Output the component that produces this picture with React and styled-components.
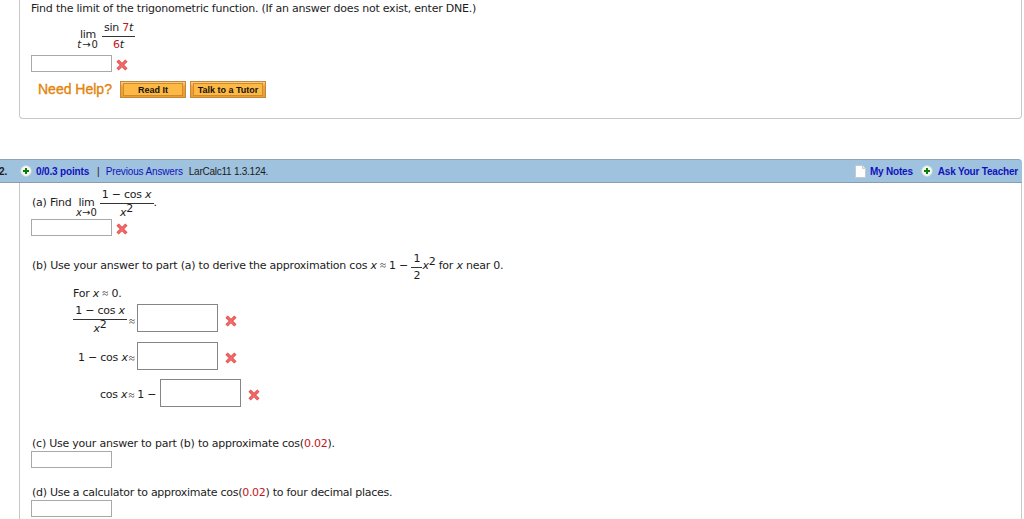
import React from 'react';
import styled, { createGlobalStyle } from 'styled-components';

const GlobalStyle = createGlobalStyle`
  * {
    box-sizing: border-box;
  }
  body {
    margin: 0;
    background: #fff;
    overflow: hidden;
  }
`;

const Page = styled.div`
  width: 1024px;
  height: 519px;
  overflow: hidden;
  color: #1c1c1c;
  font: 11px/16px 'DejaVu Sans', Verdana, sans-serif;
  white-space: pre;
`;

const QuestionBody = styled.section`
  margin-left: 19px;
  width: 1003px;
  height: ${props => props.$height}px;
  padding: 0 0 0 11px;
  border: 1px solid #c9c9c9;
  border-top: 0;
  border-radius: 0 0 4px 4px;
`;

const QuestionBar = styled.header`
  display: flex;
  align-items: center;
  width: 1022px;
  height: 24px;
  margin-top: 40px;
  padding-right: 4px;
  background: #9fc2df;
  border-top: 1px solid #93a4b2;
  border-bottom: 1px solid #8b9dac;
  border-radius: 0 4px 0 0;
  font: 10px/22px 'Liberation Sans', Arial, sans-serif;
`;

const BarNumber = styled.strong`
  width: 21px;
  margin-left: -1px;
  padding-top: 1px;
`;

const BarLink = styled.a`
  color: #1212bb;
  padding-top: 1px;
  margin-left: ${props => props.$gap || 0}px;
  font-weight: ${props => (props.$bold ? 'bold' : 'normal')};
  letter-spacing: ${props => props.$spacing || 0}px;
`;

const BarText = styled.span`
  padding-top: 1px;
  margin-left: ${props => props.$gap}px;
  letter-spacing: ${props => props.$spacing || 0}px;
`;

const BarTool = styled.div`
  display: flex;
  align-items: center;
  margin-left: ${props => (props.$first ? 'auto' : '8px')};
`;

const Line = styled.div`
  display: flex;
  align-items: flex-start;
  height: ${props => props.$height || 16}px;
  padding-top: ${props => props.$top || 0}px;
  padding-left: ${props => props.$indent || 0}px;
  letter-spacing: ${props => props.$spacing || -0.23}px;
`;

const Text = styled.span`
  margin-top: ${props => props.$top || 0}px;
  margin-left: ${props => props.$gap || 0}px;
`;

const Value = styled.span`
  color: #c4151c;
`;

const Approx = styled.span`
  font-family: 'Liberation Serif', serif;
  font-size: 11px;
  line-height: 0;
  margin: ${props => props.$margin || '0'};
`;

const LimitBox = styled.span`
  display: flex;
  flex-direction: column;
  align-items: center;
  width: 24px;
  margin-top: ${props => props.$top}px;
  margin-left: ${props => props.$gap || 0}px;
  line-height: 10px;
`;

const Under = styled.span`
  font-size: 10px;
  line-height: 9px;
  letter-spacing: ${props => props.$spacing || 0}px;
`;

const FractionBox = styled.span`
  display: flex;
  flex-direction: column;
  align-items: center;
  width: ${props => props.$width}px;
  margin-left: ${props => props.$gap || 0}px;
`;

const Numerator = styled.span`
  width: 100%;
  height: 16px;
  line-height: 14px;
  text-align: center;
  border-bottom: 1px solid #333;
`;

const Denominator = styled.span`
  padding-top: ${props => props.$top || 0}px;
  line-height: 16px;
`;

const Power = styled.sup`
  font-size: 11px;
  line-height: 0;
  vertical-align: 4px;
`;

const Answer = styled.input`
  display: block;
  flex: none;
  width: 81px;
  height: ${props => (props.$tall ? 28 : 17)}px;
  margin: 0;
  padding: 0 3px;
  background: #fff;
  border: 1px solid ${props => (props.$tall ? '#858585' : '#a9a9a9')};
  border-radius: 0;
  margin-left: ${props => props.$gap || 0}px;
  outline: none;
`;

const WrongIcon = styled.svg`
  flex: none;
  width: 12px;
  height: 12px;
  margin-top: ${props => props.$top}px;
  margin-left: ${props => props.$gap}px;
`;

const HelpRow = styled.div`
  display: flex;
  align-items: center;
  height: 17px;
  margin-top: 9px;
  padding-left: 7px;
`;

const HelpLabel = styled.span`
  width: 82px;
  color: #df850d;
  font: 14px/17px 'Liberation Sans', Arial, sans-serif;
  -webkit-text-stroke: 0.35px #df850d;
`;

const HelpButton = styled.button`
  width: ${props => props.$width}px;
  height: 17px;
  margin: 0 4px 0 0;
  padding: 1px 2px;
  background: linear-gradient(#ffcf85, #f3a339 30%, #ee9a2e);
  border: 1px solid #c08a3e;
  border-radius: 0;
`;

const HelpFace = styled.span`
  display: block;
  height: 13px;
  background: #fcb945;
  border: 1px solid #d08b2c;
  color: #17120b;
  font: bold 9px/12px 'Liberation Sans', Arial, sans-serif;
  text-align: center;
`;

function Wrong({ top = 0, gap = 4 }) {
  return (
    <WrongIcon viewBox="0 0 12 12" $top={top} $gap={gap}>
      <path d="M2.7 2.7 L9.3 9.3 M9.3 2.7 L2.7 9.3" stroke="#e14d4d" strokeWidth="3.2" strokeLinecap="square" />
      <path d="M2.4 2.3 L9.6 9.6 M9.6 2.3 L2.4 9.6" stroke="#f46b68" strokeWidth="1.5" strokeLinecap="round" />
    </WrongIcon>
  );
}

function PlusIcon() {
  return (
    <svg width="12" height="12" viewBox="0 0 12 12">
      <circle cx="6" cy="6" r="5.4" fill="#f4f8f3" stroke="#c5d2d8" strokeWidth="0.8" />
      <path d="M6 3V9M3 6H9" stroke="#0b7d0b" strokeWidth="2" />
    </svg>
  );
}

function NoteIcon() {
  return (
    <svg width="11" height="13" viewBox="0 0 11 13">
      <path d="M0.5 0.5H7.5L10.5 3.5V12.5H0.5Z" fill="#fdfdfd" stroke="#c3cbd0" />
      <path d="M7.5 0.5V3.5H10.5" fill="#e8e8e8" stroke="#c9ced1" />
    </svg>
  );
}

function Limit({ variable, top, gap, spacing }) {
  return (
    <LimitBox $top={top} $gap={gap}>
      <span>lim</span>
      <Under $spacing={spacing}><i>{variable}</i>→0</Under>
    </LimitBox>
  );
}

function CosFraction({ width, gap }) {
  return (
    <FractionBox $width={width} $gap={gap}>
      <Numerator>1 − cos <i>x</i></Numerator>
      <Denominator $top={1}><i>x</i><Power>2</Power></Denominator>
    </FractionBox>
  );
}

export default function App() {
  return (
    <>
      <GlobalStyle />
      <Page>
        <QuestionBody $height={119}>
          <Line $height={21} $top={1}>
            <Text>Find the limit of the trigonometric function. (If an answer does not exist, enter DNE.)</Text>
          </Line>
          <Line $height={34} $indent={45}>
            <Limit variable="t" top={9} spacing={0.9} />
            <FractionBox $width={33} $gap={2}>
              <Numerator>sin <Value>7</Value><i>t</i></Numerator>
              <Denominator><Value>6</Value><i>t</i></Denominator>
            </FractionBox>
          </Line>
          <Line $height={17}>
            <Answer />
            <Wrong top={4} />
          </Line>
          <HelpRow>
            <HelpLabel>Need Help?</HelpLabel>
            <HelpButton $width={66}><HelpFace>Read It</HelpFace></HelpButton>
            <HelpButton $width={76}><HelpFace>Talk to a Tutor</HelpFace></HelpButton>
          </HelpRow>
        </QuestionBody>

        <QuestionBar>
          <BarNumber>2.</BarNumber>
          <PlusIcon />
          <BarLink $bold $gap={4} $spacing={-0.16}>0/0.3 points</BarLink>
          <BarText $gap={8}>|</BarText>
          <BarLink $gap={6} $spacing={-0.15}>Previous Answers</BarLink>
          <BarText $gap={6} $spacing={-0.25}>LarCalc11 1.3.124.</BarText>
          <BarTool $first>
            <NoteIcon />
            <BarLink $bold $gap={4} $spacing={-0.2}>My Notes</BarLink>
          </BarTool>
          <BarTool>
            <PlusIcon />
            <BarLink $bold $gap={5} $spacing={-0.2}>Ask Your Teacher</BarLink>
          </BarTool>
        </QuestionBar>

        <QuestionBody $height={345}>
          <Line $height={36} $top={5}>
            <Text $top={7} $gap={1}>(a) Find</Text>
            <Limit variable="x" top={10} gap={3} spacing={0.2} />
            <CosFraction width={54} gap={1} />
            <Text $top={7}>.</Text>
          </Line>
          <Line $height={17}>
            <Answer />
            <Wrong top={4} />
          </Line>
          <Line $height={50} $top={16}>
            <Text $top={6} $gap={1}>(b) Use your answer to part (a) to derive the approximation cos <i>x</i> <Approx>≈</Approx> 1 − </Text>
            <FractionBox $width={11}>
              <Numerator>1</Numerator>
              <Denominator>2</Denominator>
            </FractionBox>
            <Text $top={6}><i>x</i><Power>2</Power> for <i>x</i> near 0.</Text>
          </Line>
          <Line $height={18} $indent={42}>
            <Text>For <i>x</i> <Approx>≈</Approx> 0.</Text>
          </Line>
          <Line $height={38} $indent={42}>
            <CosFraction width={54} />
            <Approx $margin="17px 0 0 2px">≈</Approx>
            <Answer $tall $gap={2} />
            <Wrong top={11} gap={7} />
          </Line>
          <Line $height={37} $indent={47}>
            <Text $top={8}>1 − cos <i>x</i></Text>
            <Approx $margin="16px 0 0 1px">≈</Approx>
            <Answer $tall $gap={3} />
            <Wrong top={10} gap={7} />
          </Line>
          <Line $height={57} $indent={69}>
            <Text $top={8}>cos <i>x</i></Text>
            <Approx $margin="16px 3px 0 1px">≈</Approx>
            <Text $top={8}>1 − </Text>
            <Answer $tall $gap={1} />
            <Wrong top={10} gap={7} />
          </Line>
          <Line $height={15}>
            <Text $gap={1}>(c) Use your answer to part (b) to approximate cos(<Value>0.02</Value>).</Text>
          </Line>
          <Answer />
          <Line $height={32} $top={17} $spacing={-0.28}>
            <Text $gap={1}>(d) Use a calculator to approximate cos(<Value>0.02</Value>) to four decimal places.</Text>
          </Line>
          <Answer />
        </QuestionBody>
      </Page>
    </>
  );
}
